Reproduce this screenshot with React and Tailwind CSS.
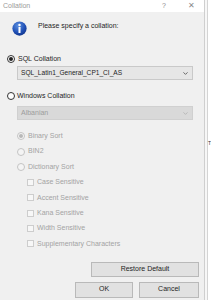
import { ChevronDown } from "lucide-react";

function Radio({ checked, disabled }) {
  const ring = disabled ? "border-[#c4c4c4] bg-[#f4f4f4]" : "border-[#333333] bg-white";
  const dot = disabled ? "bg-[#b8b8b8]" : "bg-[#222222]";
  return (
    <span className={`flex h-[8px] w-[8px] shrink-0 items-center justify-center rounded-full border ${ring}`}>
      {checked && <span className={`h-[4px] w-[4px] rounded-full ${dot}`} />}
    </span>
  );
}

function Check() {
  return <span className="h-[7px] w-[7px] shrink-0 border border-[#cdcdcd] bg-[#f7f7f7]" />;
}

function InfoIcon() {
  return (
    <svg width="15" height="15" viewBox="0 0 16 16" className="shrink-0">
      <defs>
        <radialGradient id="ig" cx="0.4" cy="0.3" r="0.8">
          <stop offset="0" stopColor="#5b8fe0" />
          <stop offset="0.6" stopColor="#1f4fb5" />
          <stop offset="1" stopColor="#0f2f80" />
        </radialGradient>
      </defs>
      <circle cx="8" cy="8" r="7.6" fill="url(#ig)" />
      <circle cx="8" cy="4.3" r="1.3" fill="#ffffff" />
      <rect x="6.9" y="6.4" width="2.2" height="6.4" rx="0.4" fill="#ffffff" />
    </svg>
  );
}

const options = [
  { label: "Binary Sort", type: "radio", checked: true },
  { label: "BIN2", type: "radio" },
  { label: "Dictionary Sort", type: "radio" },
  { label: "Case Sensitive", type: "check" },
  { label: "Accent Sensitive", type: "check" },
  { label: "Kana Sensitive", type: "check" },
  { label: "Width Sensitive", type: "check" },
  { label: "Supplementary Characters", type: "check" },
];

export default function App() {
  return (
    <div className="flex h-[300px] w-[211px] overflow-hidden bg-white font-['Liberation_Sans',Arial,sans-serif] text-[7px] text-[#1e1e1e]">
      {/* dialog */}
      <div className="flex w-[205px] shrink-0 flex-col border-r border-[#cfcfcf] bg-[#f0f0f0]">
        <div className="flex h-[12px] shrink-0 items-center bg-white pl-[3px] text-[7px] text-[#9a9a9a]">
          <span>Collation</span>
          <span className="ml-auto mr-[22px] text-[#8a8a8a]">?</span>
          <span className="mr-[9px] text-[8px] text-[#8a8a8a]">✕</span>
        </div>

        <div className="flex flex-col">
          <div className="flex items-start pl-[12px] pt-[9px]">
            <InfoIcon />
            <span className="ml-[11px] leading-[9px]">Please specify a collation:</span>
          </div>

          <label className="mt-[18px] flex h-[10px] items-center gap-[3px] pl-[7px]">
            <Radio checked />
            <span>SQL Collation</span>
          </label>
          <div className="ml-[17px] mt-[2px] flex h-[14px] w-[176px] items-center border border-[#c9c9c9] bg-[#e6e6e6] px-[3px]">
            <span className="text-[6.6px]">SQL_Latin1_General_CP1_CI_AS</span>
            <ChevronDown className="ml-auto h-[7px] w-[7px] text-[#555555]" strokeWidth={3} />
          </div>

          <label className="mt-[11px] flex h-[10px] items-center gap-[2px] pl-[7px]">
            <Radio />
            <span>Windows Collation</span>
          </label>
          <div className="ml-[17px] mt-[5px] flex h-[14px] w-[176px] items-center border border-[#d0d0d0] bg-[#d9d9d9] px-[3px] text-[#9c9c9c]">
            <span>Albanian</span>
            <ChevronDown className="ml-auto h-[7px] w-[7px] text-[#b4b4b4]" strokeWidth={3} />
          </div>

          <div className="mt-[8.5px] flex flex-col text-[#a3a3a3]">
            {options.map((o) => (
              <div
                key={o.label}
                className={`flex h-[15.4px] items-center gap-[3px] ${o.type === "radio" ? "pl-[17px]" : "pl-[27px]"}`}
              >
                {o.type === "radio" ? <Radio checked={o.checked} disabled /> : <Check />}
                <span>{o.label}</span>
              </div>
            ))}
          </div>

          <button className="ml-[91px] mt-[10px] h-[15px] w-[108px] border border-[#b9b9b9] bg-[#e1e1e1] text-[7px] text-[#1e1e1e]">
            Restore Default
          </button>
          <div className="mt-[5px] flex">
            <button className="ml-[75px] h-[16px] w-[58px] border border-[#b9b9b9] bg-[#e1e1e1] text-[7px] text-[#1e1e1e]">
              OK
            </button>
            <button className="ml-[6px] h-[16px] w-[60px] border border-[#b9b9b9] bg-[#e1e1e1] text-[7px] text-[#1e1e1e]">
              Cancel
            </button>
          </div>
        </div>
      </div>

      {/* page behind */}
      <div className="flex flex-1 flex-col bg-[#f7f7f7]">
        <div className="ml-[2px] flex h-full border-l border-[#d4d4d4] bg-white">
          <span className="mt-[140px] text-[5px] text-[#333333]">T</span>
        </div>
      </div>
    </div>
  );
}
